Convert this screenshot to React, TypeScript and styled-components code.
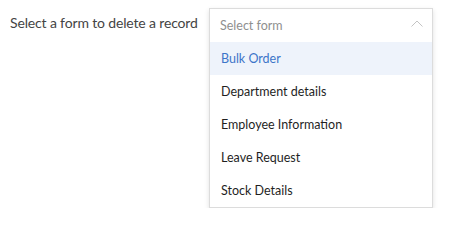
import React, { useState } from 'react';
import styled, { createGlobalStyle } from 'styled-components';

const GlobalStyle = createGlobalStyle`
    html, body {
        margin: 0;
        padding: 0;
        background: #ffffff;
        font-family: 'Lato', 'Open Sans', sans-serif;
    }
`;

const forms = [
    'Bulk Order',
    'Department details',
    'Employee Information',
    'Leave Request',
    'Stock Details',
];

const App: React.FC = () => {
    const [active, setActive] = useState<number>(0);

    return (
        <>
            <GlobalStyle />
            <Page>
                <Label>Select a form to delete a record</Label>
                <Dropdown>
                    <SelectHeader>
                        <Placeholder>Select form</Placeholder>
                        <Chevron width="12" height="7" viewBox="0 0 12 7">
                            <path d="M0.5 6.5 L6 1 L11.5 6.5" fill="none" stroke="#c4c4c4" strokeWidth="1" />
                        </Chevron>
                    </SelectHeader>
                    <OptionList>
                        { forms.map((name, i) => (
                            <Option
                                key={ name }
                                $active={ i === active }
                                onMouseEnter={ () => setActive(i) }
                            >
                                { name }
                            </Option>
                        )) }
                    </OptionList>
                </Dropdown>
            </Page>
        </>
    );
}

const Page = styled.div`
    display: flex;
    align-items: flex-start;
    padding: 8px 0 0 10px;
`

const Label = styled.div`
    flex: 0 0 199px;
    white-space: nowrap;
    padding-top: 6px;
    font-size: 14px;
    letter-spacing: -0.15px;
    line-height: 18px;
    color: #444444;
`

const Dropdown = styled.div`
    flex: 0 0 auto;
    width: 222px;
    border: 1px solid #dcdcdc;
    background: #ffffff;
    box-shadow: 0 2px 5px rgba(0, 0, 0, 0.12);
`

const SelectHeader = styled.div`
    display: flex;
    align-items: center;
    justify-content: space-between;
    height: 33px;
    padding: 0 9px 0 10px;
`

const Placeholder = styled.span`
    font-size: 12.5px;
    color: #8f8f8f;
`

const Chevron = styled.svg`
    display: block;
    margin-top: -4px;
`

const OptionList = styled.ul`
    list-style: none;
    margin: 0;
    padding: 0;
`

const Option = styled.li<{ $active: boolean }>`
    height: 33px;
    display: flex;
    align-items: center;
    padding: 0 11px;
    font-size: 12.5px;
    color: ${ p => p.$active ? '#3d75c9' : '#1f1f1f' };
    background: ${ p => p.$active ? '#eef3fb' : 'transparent' };
    cursor: pointer;
`

export default App;
